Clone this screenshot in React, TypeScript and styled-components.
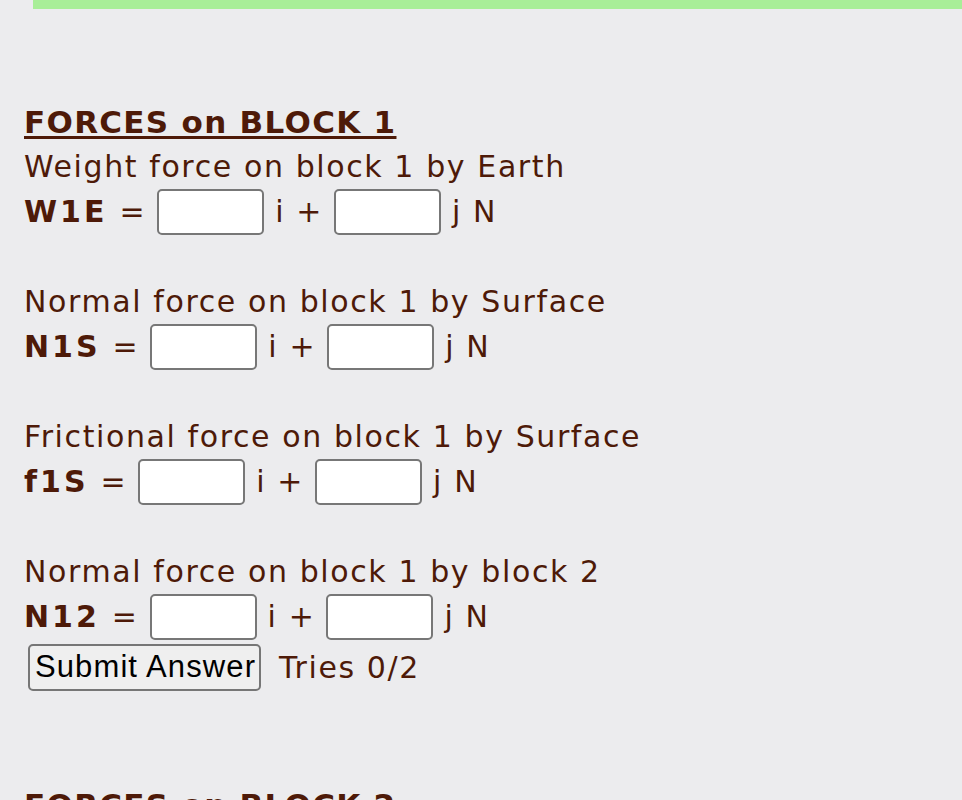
import styled, { createGlobalStyle } from "styled-components";

const INK = "#4e1a08";

const GlobalStyle = createGlobalStyle`
  html, body {
    margin: 0;
    padding: 0;
    background: #ececee;
  }
  body {
    font-family: "DejaVu Sans", Verdana, sans-serif;
    color: ${INK};
  }
`;

type Force = {
  prompt: string;
  label: string;
};

const FORCES: Force[] = [
  { prompt: "Weight force on block 1 by Earth", label: "W1E" },
  { prompt: "Normal force on block 1 by Surface", label: "N1S" },
  { prompt: "Frictional force on block 1 by Surface", label: "f1S" },
  { prompt: "Normal force on block 1 by block 2", label: "N12" },
];

export default function App() {
  return (
    <>
      <GlobalStyle />
      <TopBar />
      <Content>
        <Heading>FORCES on BLOCK 1</Heading>
        {FORCES.map((f, i) => (
          <ForceBlock key={f.label} $last={i === FORCES.length - 1}>
            <Prompt>{f.prompt}</Prompt>
            <Row>
              <Label>{f.label}</Label>
              <Op>=</Op>
              <Field type="text" aria-label={`${f.label} i`} />
              <Op>i +</Op>
              <Field type="text" aria-label={`${f.label} j`} />
              <Op>j N</Op>
            </Row>
          </ForceBlock>
        ))}
        <SubmitRow>
          <SubmitButton type="button">Submit Answer</SubmitButton>
          <Tries>Tries 0/2</Tries>
        </SubmitRow>
        <Heading $next>FORCES on BLOCK 2</Heading>
      </Content>
    </>
  );
}

const TopBar = styled.div`
  height: 9px;
  margin-left: 33px;
  background: #a8ee98;
`;

const Content = styled.div`
  padding: 0 24px;
  font-size: 30px;
  letter-spacing: 1.6px;
`;

const Heading = styled.h2<{ $next?: boolean }>`
  margin: ${(p) => (p.$next ? "92px" : "92px")} 0 0;
  font-size: 31px;
  font-weight: bold;
  letter-spacing: 1.3px;
  line-height: 43px;
  text-decoration: underline;
  text-decoration-thickness: 3px;
  text-underline-offset: 3px;
`;

const ForceBlock = styled.div<{ $last?: boolean }>`
  margin-bottom: ${(p) => (p.$last ? "0" : "45px")};
`;

const Prompt = styled.div`
  line-height: 45px;
  height: 45px;
`;

const Row = styled.div`
  display: flex;
  align-items: center;
  height: 45px;
  white-space: nowrap;
`;

const Label = styled.span`
  font-weight: bold;
  letter-spacing: 3px;
  margin-right: 12px;
`;

const Op = styled.span`
  margin-right: 9px;
`;

const Field = styled.input`
  box-sizing: border-box;
  width: 107px;
  height: 46px;
  margin: 0 11px 0 2px;
  border: 2px solid #777777;
  border-radius: 5px;
  background: #ffffff;
  font-size: 20px;
  padding: 0 6px;
`;

const SubmitRow = styled.div`
  display: flex;
  align-items: center;
  gap: 18px;
  margin-top: 3px;
  padding-left: 4px;
  height: 50px;
`;

const SubmitButton = styled.button`
  box-sizing: border-box;
  height: 47px;
  padding: 0 3px 0 5px;
  font-family: "Liberation Sans", Arial, sans-serif;
  font-size: 31px;
  letter-spacing: 1.1px;
  color: #000000;
  background: #efefef;
  border: 2px solid #767676;
  border-radius: 5px;
`;

const Tries = styled.span`
  font-size: 30px;
`;
